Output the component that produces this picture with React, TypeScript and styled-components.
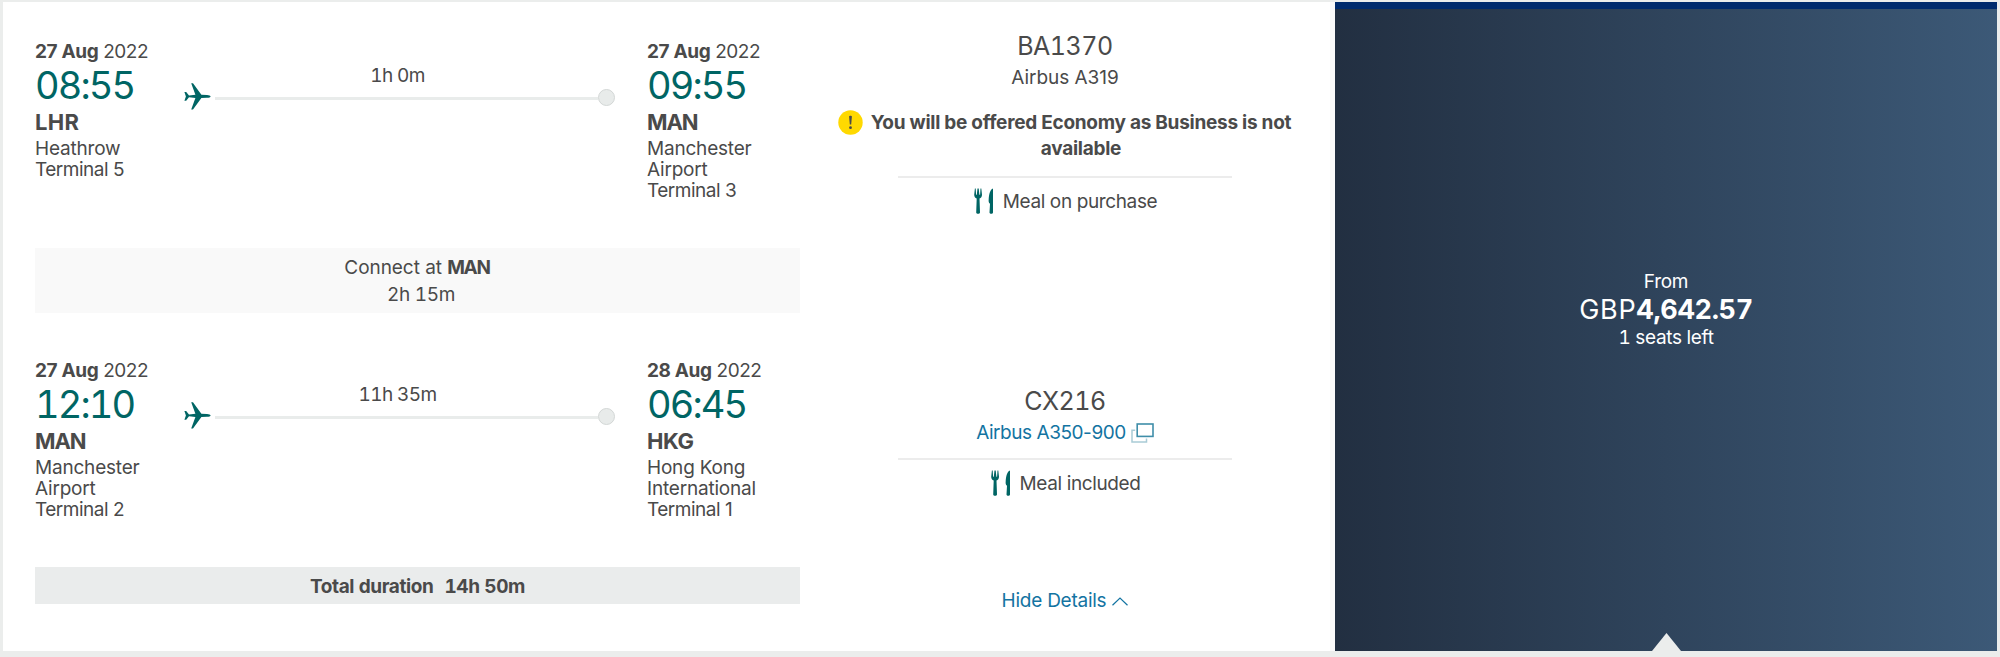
import React from 'react';
import styled, { createGlobalStyle } from 'styled-components';

const teal = '#006564';
const ink = '#4a4a4a';
const link = '#1374a2';

const GlobalStyle = createGlobalStyle`
  * { box-sizing: border-box; }
  body {
    margin: 0;
    background: #ebedec;
    color: ${ink};
    font-family: Inter, 'Liberation Sans', sans-serif;
    font-size: 19px;
    letter-spacing: -0.3px;
  }
`;

const Card = styled.article`
  display: grid;
  grid-template-columns: 797px 530px 5px 662px;
  height: 657px;
  border: solid #ebedec;
  border-width: 2px 3px 6px;
  background: #fff;
`;

const Itinerary = styled.section`
  padding: 37px 0 0 32px;
`;

const Segment = styled.div`
  display: grid;
  grid-template-columns: 149px 431px 185px;
  height: 209px;
`;

const Endpoint = styled.div<{ $arrival?: boolean }>`
  padding: 1px 0 0 ${(p) => (p.$arrival ? '32px' : '0')};
`;

const DateLine = styled.div`
  line-height: 24px;
  letter-spacing: -0.5px;
  b { letter-spacing: -0.35px; }
`;

const Time = styled.div`
  font-size: 38px;
  font-variant-numeric: tabular-nums;
  line-height: 43px;
  letter-spacing: -1.9px;
  color: ${teal};
`;

const Code = styled.div<{ $spacing: number }>`
  margin: 2px 0 3px;
  font-size: 22px;
  font-weight: 700;
  line-height: 26px;
  letter-spacing: ${(p) => p.$spacing}px;
`;

const PlaceLine = styled.div<{ $spacing?: number }>`
  line-height: 21px;
  white-space: nowrap;
  letter-spacing: ${(p) => p.$spacing ?? -0.2}px;
`;

const Track = styled.div`
  padding-top: 24px;
`;

const Duration = styled.div`
  height: 20px;
  padding-right: 4px;
  font-variant-numeric: tabular-nums;
  line-height: 26px;
  letter-spacing: -0.6px;
  text-align: center;
`;

const Route = styled.div`
  display: flex;
  align-items: center;
  height: 27px;
`;

const Line = styled.span`
  flex: 1;
  height: 3px;
  margin: 3px 0 0 4px;
  background: #e9eceb;
`;

const Stop = styled.span`
  width: 17px;
  height: 17px;
  margin-top: 2px;
  border: 1px solid #d3d7d6;
  border-radius: 50%;
  background: #e8ebea;
`;

const Connection = styled.div`
  height: 65px;
  margin-bottom: 45px;
  padding-top: 6px;
  background: #f9f9f9;
  text-align: center;
  line-height: 27px;
`;

const ConnectAt = styled.div`
  padding-right: 1px;
  letter-spacing: -0.05px;
  b { letter-spacing: -1.3px; }
`;

const Layover = styled.div`
  padding-left: 7px;
  font-variant-numeric: tabular-nums;
`;

const Total = styled.div`
  display: flex;
  justify-content: center;
  gap: 11px;
  height: 37px;
  background: #eaecec;
  font-weight: 700;
  font-variant-numeric: tabular-nums;
  line-height: 39px;
  letter-spacing: -0.4px;
`;

const Details = styled.section`
  display: flex;
  flex-direction: column;
  align-items: center;
  padding-top: 28px;
`;

const FlightBlock = styled.div<{ $height: number }>`
  display: flex;
  flex-direction: column;
  align-items: center;
  height: ${(p) => p.$height}px;
`;

const FlightNo = styled.div`
  font-size: 25px;
  font-variant-numeric: tabular-nums;
  line-height: 32px;
  letter-spacing: -0.5px;
`;

const Aircraft = styled.div<{ $link?: boolean }>`
  display: flex;
  align-items: center;
  gap: 5px;
  margin-top: 3px;
  line-height: 26px;
  letter-spacing: ${(p) => (p.$link ? '-0.45px' : '-0.05px')};
  color: ${(p) => (p.$link ? link : ink)};
`;

const Warning = styled.div`
  display: flex;
  gap: 8px;
  margin-top: 19px;
  padding-right: 1px;
  font-weight: 700;
  line-height: 26px;
  letter-spacing: -0.26px;
  text-align: center;
`;

const Divider = styled.hr<{ $top: number }>`
  width: 334px;
  height: 2px;
  margin: ${(p) => p.$top}px 0 0;
  border: 0;
  background: #ececec;
`;

const Meal = styled.div`
  display: flex;
  gap: 9px;
  margin-top: 10px;
  padding-left: 1px;
  line-height: 27px;
  letter-spacing: -0.38px;
`;

const Toggle = styled.a`
  display: flex;
  align-items: center;
  gap: 6px;
  color: ${link};
  line-height: 26px;
  letter-spacing: -0.25px;
`;

const Gutter = styled.div`
  background: #fafafa;
`;

const Fare = styled.section`
  position: relative;
  display: flex;
  flex-direction: column;
  align-items: center;
  padding: 260px 0 0;
  border-top: 7px solid #002b6d;
  background: linear-gradient(90deg, #222f41, #3c5977);
  color: #fff;
`;

const FareNote = styled.div`
  font-variant-numeric: tabular-nums;
  line-height: 26px;
`;

const Price = styled.div`
  font-size: 27px;
  font-variant-numeric: tabular-nums;
  line-height: 30px;
  letter-spacing: 0.7px;
  b { letter-spacing: -0.35px; }
`;

const Pointer = styled.svg`
  position: absolute;
  left: 317px;
  bottom: 0;
`;

const Plane = () => (
  <svg width="27" height="27" viewBox="0 0 27 27" fill={teal}>
    <path d="M7.2 0.2 H9 L17.4 11.7 L23 12 C25 12.2 26.6 12.7 26.6 13.4 C26.6 14.1 25 14.6 23 14.8 L17.4 15.1 L9 26.6 H7.2 L11.4 15.1 L5 14.2 L2.2 17.7 H0.4 L1.9 13.4 L0.4 9.1 H2.2 L5 12.6 L11.4 11.7 Z" />
  </svg>
);

const Cutlery = () => (
  <svg width="20" height="27" viewBox="0 0 20 27" fill={teal}>
    <path d="M0.9 0.5 H1.7 L2.1 6.8 H2.8 L3.5 0.5 H4.7 L5.4 6.8 H6.1 L6.5 0.5 H7.3 L8 6.8 C8 8.8 7 10 5.5 10.6 L6 24.4 C6 26.2 2.2 26.2 2.2 24.4 L2.7 10.6 C1.2 10 0.2 8.8 0.2 6.8 Z" />
    <path d="M19 0.5 V24.4 C19 26.2 15.5 26.2 15.5 24.4 L16 15.8 C14.7 15 14.5 13.5 14.7 11 C15 6 16.2 1.5 19 0.5 Z" />
  </svg>
);

const Alert = () => (
  <svg width="25" height="25" viewBox="0 0 25 25">
    <circle cx="12.5" cy="12.5" r="12.2" fill="#ffd900" />
    <path d="M11.1 6.4 C11.1 5.4 13.9 5.4 13.9 6.4 L13.2 14.6 H11.8 Z" fill={ink} />
    <circle cx="12.5" cy="17.7" r="1.4" fill={ink} />
  </svg>
);

const Popup = () => (
  <svg width="23" height="20" viewBox="0 0 23 20" fill="none">
    <path d="M4.2 7.2 H1 V19 H15.5 V15.5" stroke="#a9cbd6" strokeWidth="1.5" />
    <rect x="6.2" y="1" width="15.8" height="12.4" stroke="#3f8ea9" strokeWidth="1.6" />
  </svg>
);

const Chevron = () => (
  <svg width="16" height="9" viewBox="0 0 16 9" fill="none" stroke={link} strokeWidth="1.2">
    <path d="M0.5 8.3 L8 1 L15.5 8.3" />
  </svg>
);

type Stopover = { day: string; time: string; code: string; spacing: number; place: string[] };

const legs: { from: Stopover; to: Stopover; duration: string }[] = [
  {
    from: { day: '27 Aug', time: '08:55', code: 'LHR', spacing: 0.3, place: ['Heathrow', 'Terminal 5'] },
    to: { day: '27 Aug', time: '09:55', code: 'MAN', spacing: -1.1, place: ['Manchester', 'Airport', 'Terminal 3'] },
    duration: '1h 0m',
  },
  {
    from: { day: '27 Aug', time: '12:10', code: 'MAN', spacing: -1.1, place: ['Manchester', 'Airport', 'Terminal 2'] },
    to: { day: '28 Aug', time: '06:45', code: 'HKG', spacing: -0.5, place: ['Hong Kong', 'International', 'Terminal 1'] },
    duration: '11h 35m',
  },
];

const Place = ({ stop, arrival }: { stop: Stopover; arrival?: boolean }) => (
  <Endpoint $arrival={arrival}>
    <DateLine><b>{stop.day}</b> 2022</DateLine>
    <Time>{stop.time}</Time>
    <Code $spacing={stop.spacing}>{stop.code}</Code>
    {stop.place.map((line) => (
      <PlaceLine key={line} $spacing={line.startsWith('Terminal') ? -0.5 : undefined}>{line}</PlaceLine>
    ))}
  </Endpoint>
);

const Leg = ({ leg }: { leg: (typeof legs)[number] }) => (
  <Segment>
    <Place stop={leg.from} />
    <Track>
      <Duration>{leg.duration}</Duration>
      <Route><Plane /><Line /><Stop /></Route>
    </Track>
    <Place stop={leg.to} arrival />
  </Segment>
);

export default function App() {
  return (
    <>
      <GlobalStyle />
      <Card>
        <Itinerary>
          <Leg leg={legs[0]} />
          <Connection>
            <ConnectAt>Connect at <b>MAN</b></ConnectAt>
            <Layover>2h 15m</Layover>
          </Connection>
          <Leg leg={legs[1]} />
          <Total><span>Total duration</span><span>14h 50m</span></Total>
        </Itinerary>
        <Details>
          <FlightBlock $height={355}>
            <FlightNo>BA1370</FlightNo>
            <Aircraft>Airbus A319</Aircraft>
            <Warning>
              <Alert />
              <div>You will be offered Economy as Business is not<br />available</div>
            </Warning>
            <Divider $top={14} />
            <Meal><Cutlery />Meal on purchase</Meal>
          </FlightBlock>
          <FlightBlock $height={203}>
            <FlightNo>CX216</FlightNo>
            <Aircraft $link>Airbus A350-900<Popup /></Aircraft>
            <Divider $top={12} />
            <Meal><Cutlery />Meal included</Meal>
          </FlightBlock>
          <Toggle>Hide Details<Chevron /></Toggle>
        </Details>
        <Gutter />
        <Fare>
          <FareNote>From</FareNote>
          <Price>GBP<b>4,642.57</b></Price>
          <FareNote>1 seats left</FareNote>
          <Pointer width="29" height="18" viewBox="0 0 29 18"><path d="M0 18 L14.5 0 L29 18 Z" fill="#ebedec" /></Pointer>
        </Fare>
      </Card>
    </>
  );
}
